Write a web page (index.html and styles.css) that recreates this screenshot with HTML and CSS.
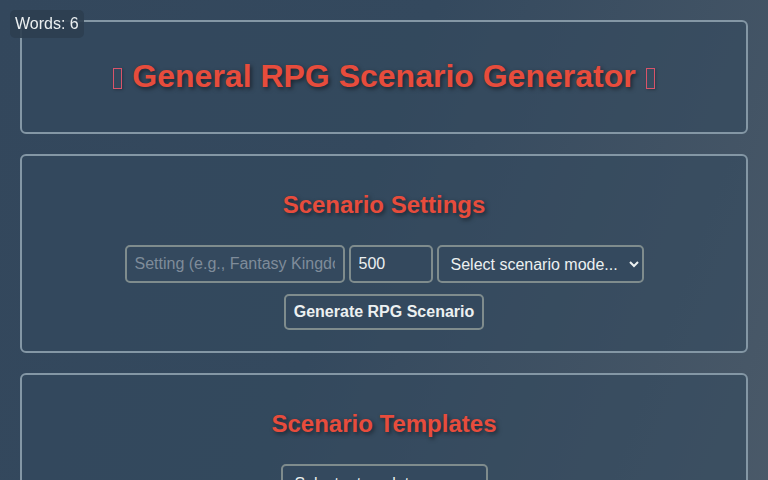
FILE: index.html
```html
<!DOCTYPE html>
<html lang="en">
<head>
    <meta charset="UTF-8">
    <meta name="viewport" content="width=device-width, initial-scale=1.0">
    <title>General RPG Scenario Generator</title>
    <link rel="stylesheet" href="styles.css">
</head>
<body>

<div class="word-count">Words: 6</div>

<div class="container header">
    <h1><span class="glyph"></span> General RPG Scenario Generator <span class="glyph"></span></h1>
</div>

<div class="container">
    <h2>Scenario Settings</h2>
    <div class="controls">
        <input type="text" id="setting" class="setting" placeholder="Setting (e.g., Fantasy Kingdom, Space Station)">
        <input type="number" id="wordLimit" class="limit" value="500">
        <select id="mode" class="mode">
            <option value="">Select scenario mode...</option>
            <option value="quest">Quest</option>
            <option value="dungeon">Dungeon</option>
            <option value="intrigue">Intrigue</option>
        </select>
    </div>
    <div class="controls">
        <button id="generate">Generate RPG Scenario</button>
    </div>
</div>

<div class="container">
    <h2>Scenario Templates</h2>
    <div class="controls">
        <select id="template" class="template">
            <option value="">Select a template...</option>
            <option value="tavern">Tavern Brawl</option>
            <option value="heist">Royal Heist</option>
        </select>
    </div>
</div>

</body>
</html>
```

FILE: styles.css
```css
* {
    box-sizing: border-box;
}
body {
    font-family: 'Liberation Sans', Arial, sans-serif;
    background: linear-gradient(110deg, #33475c 0%, #34495e 45%, #4b5a69 100%);
    color: #ecf0f1;
    margin: 0;
    padding: 20px;
    min-height: 100vh;
}
.word-count {
    position: fixed;
    top: 10px;
    left: 10px;
    background-color: rgba(44, 62, 80, 0.9);
    color: #ecf0f1;
    padding: 5px;
    border-radius: 5px;
    font-size: 16px;
    z-index: 10;
}
.container {
    background-color: rgba(52, 73, 94, 0.6);
    border: 2px solid #8497a5;
    border-radius: 6px;
    padding: 15px 15px 21px;
    margin-bottom: 20px;
    text-align: center;
}
.container.header {
    padding-bottom: 15px;
}
h1 {
    color: #e74c3c;
    font-size: 2em;
    margin: 0.67em 0;
    text-shadow: 2px 2px 4px rgba(0, 0, 0, 0.5);
}
/* missing-glyph boxes either side of the title */
.glyph {
    display: inline-block;
    width: 9px;
    height: 21px;
    margin: 0 1px;
    border: 1px solid #d9546a;
    vertical-align: -2px;
    box-shadow: 1px 1px 3px rgba(0, 0, 0, 0.25);
}
h2 {
    color: #e74c3c;
    font-size: 1.5em;
    margin: 0.83em 0;
    text-shadow: 2px 2px 4px rgba(0, 0, 0, 0.5);
}
.controls {
    display: flex;
    justify-content: center;
    flex-wrap: wrap;
    gap: 4px;
    padding-top: 6px;
}
input, select, button {
    font-family: 'Liberation Sans', Arial, sans-serif;
    font-size: 16px;
    color: #ecf0f1;
    background-color: #34495e;
    border: 2px solid #7f8c8d;
    border-radius: 5px;
    padding: 8px;
    height: 38px;
}
input::placeholder {
    color: #7f8c9a;
}
.setting {
    width: 220px;
}
.limit {
    width: 84px;
}
.mode, .template {
    width: 207px;
}
button {
    font-weight: bold;
    height: 36px;
    padding: 6px 8px;
    margin-top: 5px;
    cursor: pointer;
}
button:hover {
    background-color: #3d566e;
}
```
